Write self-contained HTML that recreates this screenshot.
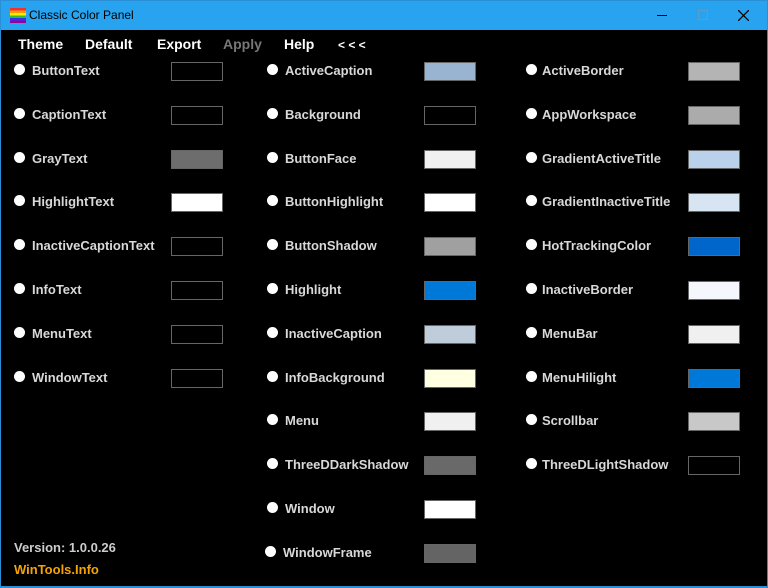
<!DOCTYPE html>
<html><head><meta charset="utf-8"><style>
*{margin:0;padding:0;box-sizing:border-box}
body{width:768px;height:588px;background:#000;position:relative;overflow:hidden;font-family:"Liberation Sans",sans-serif}
.frame{position:absolute;left:0;top:0;width:768px;height:588px;border:1px solid #2a8fd6;border-bottom-width:2px}
.title{position:absolute;left:0;top:0;width:768px;height:30px;background:#28a3ef}
.title span{position:absolute;left:29px;top:8px;font-size:12px;color:#000}
.menu{position:absolute;top:36px;font-size:14px;font-weight:bold;color:#fff}
.r{position:absolute;width:11px;height:11px;border-radius:50%;background:#fff}
.l{position:absolute;font-size:13px;font-weight:bold;color:#d8d8d8}
.s{position:absolute;width:52px;height:19px;border:1px solid #666}
</style></head><body>
<div class="title">
<svg style="position:absolute;left:10px;top:8px" width="16" height="15"><rect y="0" width="16" height="2.5" fill="#e33"/><rect y="2.5" width="16" height="2.5" fill="#f90"/><rect y="5" width="16" height="2.5" fill="#fe0"/><rect y="7.5" width="16" height="2.5" fill="#3b3"/><rect y="10" width="16" height="2.5" fill="#33e"/><rect y="12.5" width="16" height="2.5" fill="#909"/></svg>
<span>Classic Color Panel</span>
<div style="position:absolute;left:657px;top:15px;width:10px;height:1px;background:#000"></div>
<div style="position:absolute;left:698px;top:10px;width:10px;height:10px;border:1px solid #5a9ecf"></div>
<svg style="position:absolute;left:738px;top:10px" width="11" height="11"><path d="M0 0L11 11M11 0L0 11" stroke="#000" stroke-width="1.2"/></svg>
</div>
<div class="menu" style="left:18px">Theme</div>
<div class="menu" style="left:85px">Default</div>
<div class="menu" style="left:157px">Export</div>
<div class="menu" style="left:223px;color:#777">Apply</div>
<div class="menu" style="left:284px">Help</div>
<div class="menu" style="left:338px;font-size:12px;top:38px">&lt; &lt; &lt;</div>
<div id="c"></div>
<div class="l" style="left:14px;top:540px;color:#ccc">Version: 1.0.0.26</div>
<div class="l" style="left:14px;top:562px;color:#f5a300">WinTools.Info</div>
<div class="frame"></div>
<script>
var cols=[[14,32,171,[["ButtonText","#000"],["CaptionText","#000"],["GrayText","#6d6d6d"],["HighlightText","#fff"],["InactiveCaptionText","#000"],["InfoText","#000"],["MenuText","#000"],["WindowText","#000"]]],
[267,285,424,[["ActiveCaption","#99b4d1"],["Background","#000"],["ButtonFace","#f0f0f0"],["ButtonHighlight","#fff"],["ButtonShadow","#a0a0a0"],["Highlight","#0078d7"],["InactiveCaption","#bfcddb"],["InfoBackground","#ffffe1"],["Menu","#f0f0f0"],["ThreeDDarkShadow","#696969"],["Window","#fff"],["WindowFrame","#646464"]]],
[526,542,688,[["ActiveBorder","#b4b4b4"],["AppWorkspace","#ababab"],["GradientActiveTitle","#b9d1ea"],["GradientInactiveTitle","#d7e4f2"],["HotTrackingColor","#0066cc"],["InactiveBorder","#f4f7fc"],["MenuBar","#f0f0f0"],["MenuHilight","#0078d7"],["Scrollbar","#c8c8c8"],["ThreeDLightShadow","#000"]]]];
var h="";
cols.forEach(function(c){c[3].forEach(function(it,i){var y=71+i*43.8;
var rx=c[0];if(c[0]==267&&i==11)rx=265;var lx=c[1];if(c[0]==267&&i==11)lx=283;
h+='<div class="r" style="left:'+rx+'px;top:'+(y-7)+'px"></div>';
h+='<div class="l" style="left:'+lx+'px;top:'+(y-8)+'px">'+it[0]+'</div>';
h+='<div class="s" style="left:'+c[2]+'px;top:'+(y-9)+'px;background:'+it[1]+'"></div>';});});
document.getElementById("c").innerHTML=h;
</script>
</body></html>
